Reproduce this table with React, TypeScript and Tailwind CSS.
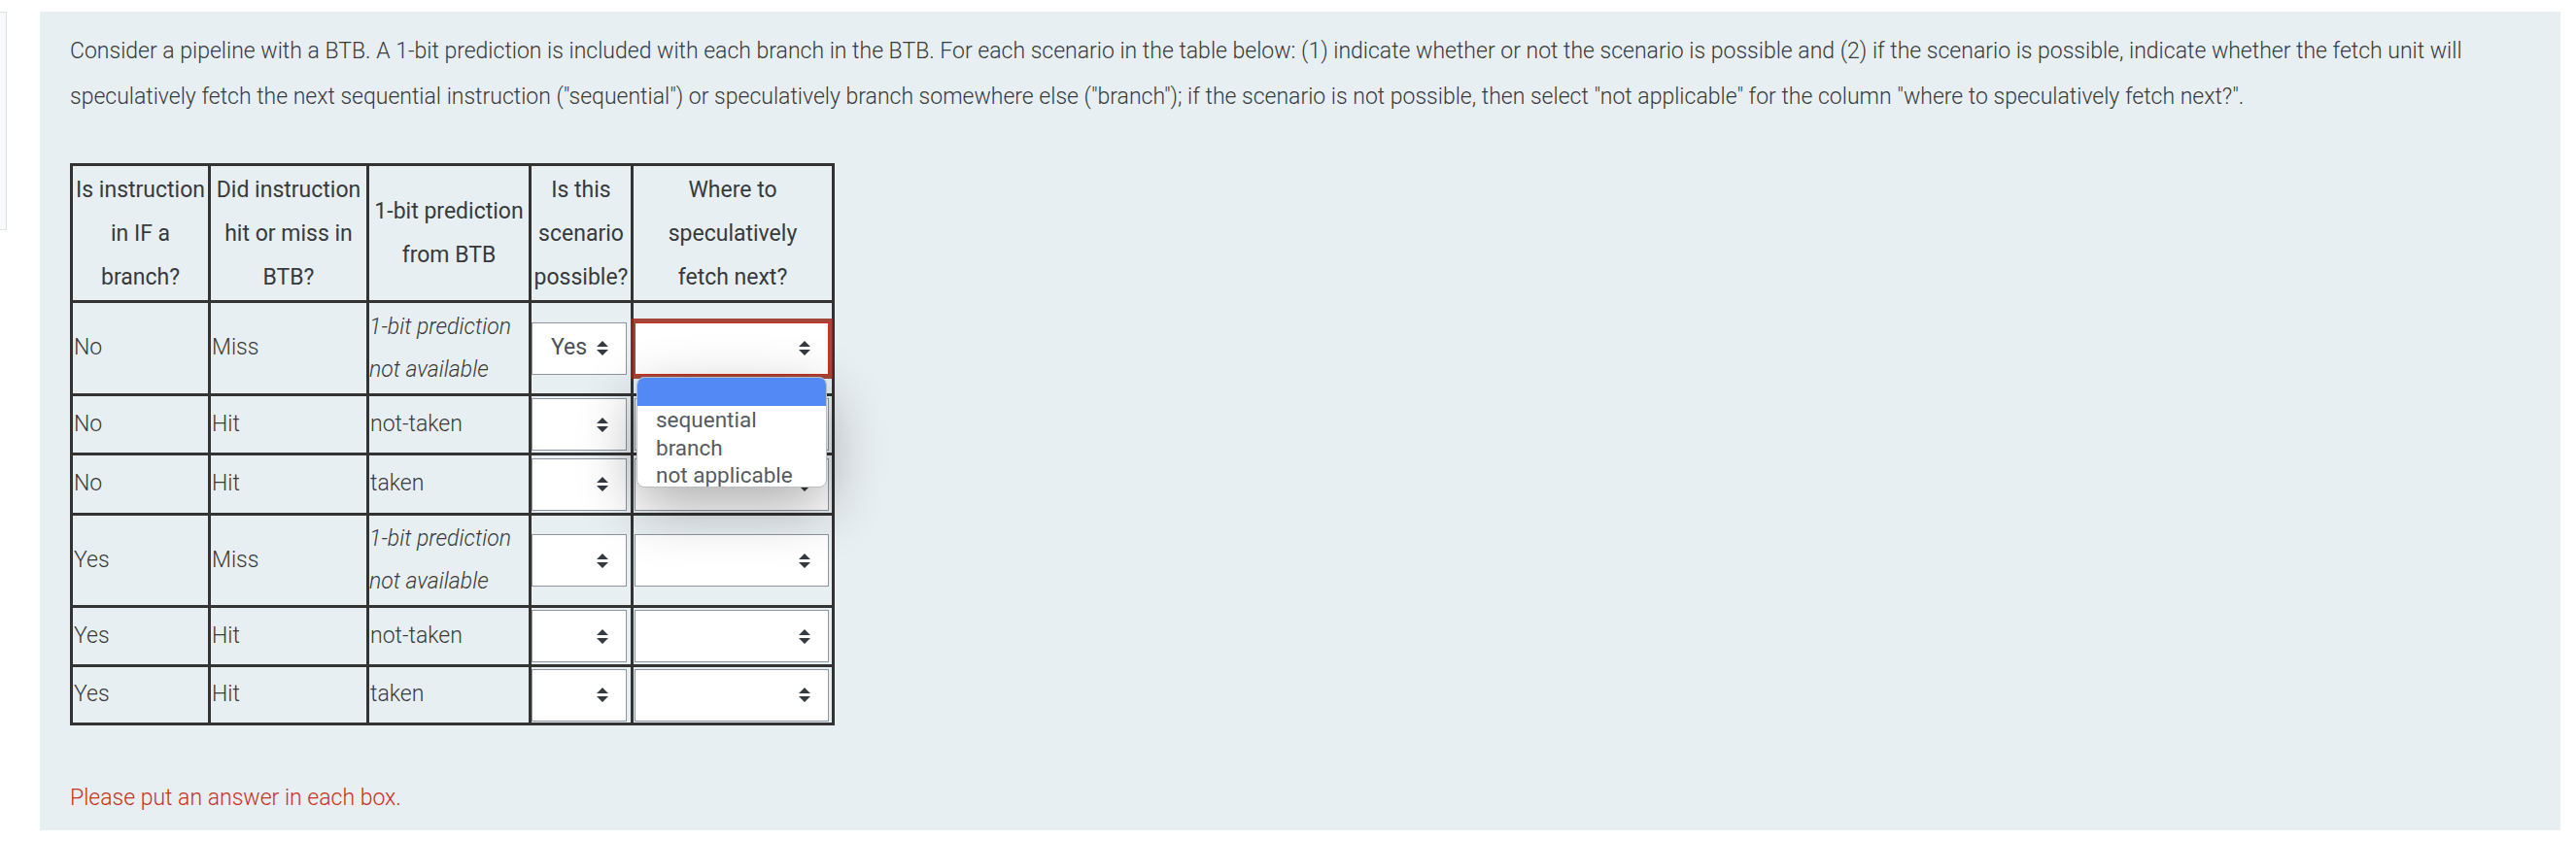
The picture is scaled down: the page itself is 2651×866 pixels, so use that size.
import React from 'react'

const ROWS = [
  { branch: 'No', hit: 'Miss', pred: null, possible: 'Yes' },
  { branch: 'No', hit: 'Hit', pred: 'not-taken', possible: '' },
  { branch: 'No', hit: 'Hit', pred: 'taken', possible: '' },
  { branch: 'Yes', hit: 'Miss', pred: null, possible: '' },
  { branch: 'Yes', hit: 'Hit', pred: 'not-taken', possible: '' },
  { branch: 'Yes', hit: 'Hit', pred: 'taken', possible: '' },
]

function Arrows() {
  return (
    <svg width="12" height="15" viewBox="0 0 4 5" className="shrink-0">
      <path d="M2 0L0 2h4zm0 5L0 3h4z" fill="#343a40" />
    </svg>
  )
}

function FakeSelect({ value, wide, invalid }: { value?: string; wide?: boolean; invalid?: boolean }) {
  return (
    <div
      className={
        'h-[54px] bg-white flex items-center justify-between pl-[19px] pr-[18px] text-[23px] font-normal text-[#495057] ' +
        (wide ? 'w-[200px] ml-[1px] ' : 'w-[98px] ') +
        (invalid
          ? 'border border-[#ca3120] shadow-[0_0_0_4px_rgba(150,40,25,0.85)]'
          : 'border border-[#8f959e]')
      }
    >
      <span>{value}</span>
      <Arrows />
    </div>
  )
}

function Dropdown() {
  return (
    <div className="absolute top-[76px] left-[3px] z-10 w-[196px] h-[114px] bg-white rounded-[8px] overflow-hidden border border-[#b9bcc0] shadow-[0_20px_60px_rgba(0,0,0,0.32)] text-[22.5px] text-[#555b63] font-normal">
      <div className="h-[29px] bg-[#5389f5]" />
      <div className="h-[28.5px] leading-[28.5px] pl-[19px]">sequential</div>
      <div className="h-[28.5px] leading-[28.5px] pl-[19px]">branch</div>
      <div className="h-[28.5px] leading-[28.5px] pl-[19px]">not applicable</div>
    </div>
  )
}

export default function App() {
  const cell = 'bg-[#e8eff3] flex items-center'
  const head = 'bg-[#e8eff3] flex items-center justify-center text-center leading-[45px] font-normal'

  return (
    <div className="min-h-screen bg-white font-['Roboto',sans-serif] text-[#373a3c]">
      <div className="flex pt-[12px]">
        <div className="w-[7px] h-[225px] border border-l-0 border-[#dee2e6] bg-[#f8f9fa] shrink-0" />
        <div className="ml-[34px] w-[2594px] h-[843px] bg-[#e8eff3] pl-[31px] pr-[28px] pt-[17px]">
          <p className="text-[23px] leading-[47px] font-light">
            Consider a pipeline with a BTB. A 1-bit prediction is included with each branch in the BTB. For each
            scenario in the table below: (1) indicate whether or not the scenario is possible and (2) if the scenario
            is possible, indicate whether the fetch unit will speculatively fetch the next sequential instruction
            ("sequential") or speculatively branch somewhere else ("branch"); if the scenario is not possible, then
            select "not applicable" for the column "where to speculatively fetch next?".
          </p>

          <div className="mt-[45px] w-fit grid grid-cols-[139px_160px_164px_102px_204px] grid-rows-[138px_93px_58px_59px_92px_58px_57px] gap-[3px] p-[3px] bg-[#333] text-[23px]">
            <div className={head}>
              <span>Is instruction<br />in IF a<br />branch?</span>
            </div>
            <div className={head}>
              <span>Did instruction<br />hit or miss in<br />BTB?</span>
            </div>
            <div className={head}>
              <span>1-bit prediction<br />from BTB</span>
            </div>
            <div className={head}>
              <span>Is this<br />scenario<br />possible?</span>
            </div>
            <div className={head}>
              <span>Where to<br />speculatively<br />fetch next?</span>
            </div>

            {ROWS.map((r, i) => (
              <React.Fragment key={i}>
                <div className={cell + ' pl-[1px] font-light'}>{r.branch}</div>
                <div className={cell + ' pl-[1px] font-light'}>{r.hit}</div>
                <div className={cell + ' font-light'}>
                  {r.pred ? (
                    <span className="pl-[1px]">{r.pred}</span>
                  ) : (
                    <span className="italic leading-[44px]">1-bit prediction<br />not available</span>
                  )}
                </div>
                <div className={cell}>
                  <FakeSelect value={r.possible} />
                </div>
                <div className={cell + ' relative'}>
                  <FakeSelect wide invalid={i === 0} />
                  {i === 0 && <Dropdown />}
                </div>
              </React.Fragment>
            ))}
          </div>

          <p className="mt-[51px] text-[23px] leading-[47px] font-light text-[#ca3120]">
            Please put an answer in each box.
          </p>
        </div>
      </div>
    </div>
  )
}
